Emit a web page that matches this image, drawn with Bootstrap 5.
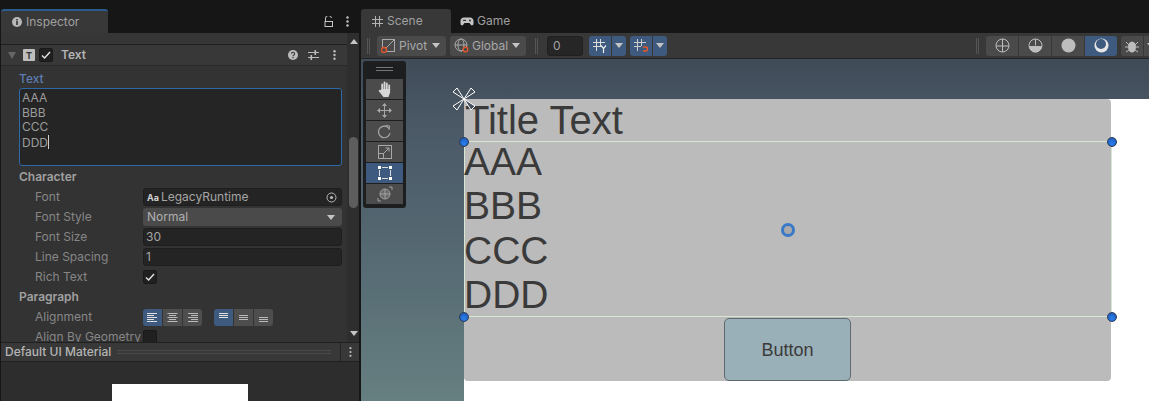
<!DOCTYPE html>
<html lang="en">
<head>
  <meta charset="UTF-8" />
  <meta name="viewport" content="width=device-width, initial-scale=1" />
  <title>Unity Editor</title>
  <link href="https://cdn.jsdelivr.net/npm/bootstrap@5.3.0/dist/css/bootstrap.min.css" rel="stylesheet" />
  <style>
    html, body { height: 401px; overflow: hidden; background: #161616; }
    body { font-family: Inter, "Liberation Sans", sans-serif; font-size: 12px; line-height: 1; color: #a4a4a4; }
    svg { display: block; flex-shrink: 0; }
    .editor { width: 1149px; height: 401px; }
    .left-side { width: 358px; margin-left: 1px; margin-right: 2px; }
    .right-side { width: 788px; }
    .tab-strip { height: 33px; padding-top: 9px; }
    .left-tab { width: 107px; height: 24px; background: #383838; border-top: 2px solid #2b5a8c; border-radius: 3px 3px 0 0; padding-left: 11px; gap: 4px; color: #a0a0a0; }
    .scene-tab { width: 90px; height: 24px; background: #383838; border-radius: 3px 3px 0 0; padding-left: 11px; gap: 4px; color: #a0a0a0; }
    .game-tab { padding-left: 9px; gap: 3px; color: #a0a0a0; }
    .tab-tools { gap: 12px; padding-right: 10px; padding-top: 1px; }
    .insp-body { background: #333; height: 309px; }
    .insp-scroll { height: 309px; min-width: 0; }
    .insp-top { height: 12px; border-bottom: 1px solid #1f1f1f; background: #363636; }
    .comp-head { height: 21px; background: #383838; border-bottom: 1px solid #2a2a2a; padding-left: 7px; padding-right: 11px; font-weight: 600; color: #b4b4b4; }
    .head-tools { gap: 10px; }
    .tri-down { width: 0; height: 0; border-left: 4.5px solid transparent; border-right: 4.5px solid transparent; border-top: 7px solid #666; }
    .t-icon { width: 12px; height: 12px; background: #bdbdbd; color: #333; font-size: 9px; font-weight: 700; border-radius: 1px; margin-left: 7px; }
    .check-box { width: 14px; height: 14px; background: #202020; border: 1px solid #191919; border-radius: 2px; }
    .comp-body { padding-left: 18px; padding-right: 3px; height: 276px; overflow: hidden; }
    .field-name { color: #5d7cb0; font-weight: 500; height: 12px; padding-top: 7px; box-sizing: content-box; padding-bottom: 3px; }
    .text-box { width: 323px; height: 78px; margin-bottom: 1px; background: #252525; border: 1px solid #2f6aa8; border-radius: 3px; padding: 2px; color: #9c9c9c; line-height: 14.6px; }
    .caret-bar { display: inline-block; width: 1px; height: 14px; background: #cfcfcf; vertical-align: -2px; }
    .group-name { height: 20px; font-weight: 600; color: #a0a0a0; }
    .prop-row { height: 20px; padding-left: 16px; color: #868686; }
    .prop-name { width: 108px; white-space: nowrap; }
    .inp-dark { width: 199px; height: 18px; background: #242424; border: 1px solid #1e1e1e; border-radius: 3px; padding-left: 2px; color: #a4a4a4; }
    .aa-glyph { font-size: 9px; font-weight: 700; color: #d0d0d0; margin-left: 1px; margin-right: 2px; }
    .inp-drop { width: 199px; height: 18px; background: #4a4a4a; border-radius: 3px; padding: 0 7px 0 4px; color: #b0b0b0; }
    .tri-small { width: 0; height: 0; border-left: 4px solid transparent; border-right: 4px solid transparent; border-top: 5px solid #c4c4c4; flex-shrink: 0; }
    .seg-group { height: 17px; gap: 1px; }
    .seg-gap { margin-left: 12px; }
    .seg-btn { width: 19px; height: 17px; background: #4e4e4e; }
    .seg-btn:first-child { border-radius: 3px 0 0 3px; }
    .seg-btn:last-child { border-radius: 0 3px 3px 0; }
    .seg-on { background: #3e5a7e; }
    .scroll-col { width: 12px; background: #2e2e2e; flex-shrink: 0; }
    .scroll-thumb { width: 9px; height: 71px; background: #5d5d5d; border-radius: 5px; margin-left: 2px; margin-top: 93px; }
    .tri-up { width: 0; height: 0; border-left: 4px solid transparent; border-right: 4px solid transparent; border-bottom: 5px solid #c4c4c4; margin: 6px 0 0 3px; }
    .tri-end { margin: auto 0 6px 3px; }
    .mat-bar { height: 20px; background: #383838; border-top: 1px solid #202020; border-bottom: 1px solid #202020; padding-left: 4px; font-weight: 500; color: #b4b4b4; gap: 6px; white-space: nowrap; }
    .mat-lines { width: 214px; height: 4px; flex-shrink: 0; border-top: 1px solid #4a4a4a; border-bottom: 1px solid #4a4a4a; }
    .mat-more { width: 19px; height: 100%; border-left: 1px solid #222; margin-left: 3px; }
    .mat-preview { height: 39px; background: #2d2d2d; padding-top: 22px; padding-left: 111px; }
    .white-swatch { width: 136px; height: 17px; background: #fff; }
    .tool-strip { height: 26px; background: #383838; padding-left: 6px; border-bottom: 1px solid #242424; overflow: hidden; }
    .grip { width: 3px; height: 16px; border-left: 1px solid #555; border-right: 1px solid #555; flex-shrink: 0; }
    .tb-btn { height: 20px; background: #4a4a4a; border-radius: 3px; color: #a8a8a8; gap: 3px; padding: 0 6px 0 4px; flex-shrink: 0; }
    .btn-pivot { width: 69px; margin-left: 7px; }
    .btn-global { width: 76px; margin-left: 4px; }
    .grip-mid { margin-left: 9px; }
    .tb-blue { height: 20px; background: #3e5a7e; flex-shrink: 0; }
    .snap-l { width: 22px; border-radius: 3px 0 0 3px; }
    .snap-r { width: 14px; margin-left: 1px; border-radius: 0 3px 3px 0; }
    .snap-first { margin-left: 6px; }
    .snap-next { margin-left: 4px; }
    .snap-inp { width: 36px; height: 20px; margin-left: 9px; background: #262626; border: 1px solid #202020; border-radius: 3px; padding-left: 5px; color: #a4a4a4; }
    .view-tools { margin-right: -9px; }
    .view-grip { margin-right: 7px; }
    .view-set { column-gap: 1px; }
    .view-btn { width: 32px; height: 20px; background: #4a4a4a; }
    .view-btn:first-child { border-radius: 3px 0 0 3px; }
    .view-btn:last-child { border-radius: 0 3px 3px 0; background: #3e5a7e; }
    .bug-btn { width: 22px; margin-left: 4px; padding: 0; border-radius: 3px 0 0 3px; }
    .bug-drop { width: 14px; margin-left: 1px; padding: 0; border-radius: 0 3px 3px 0; }
    .scene-canvas { position: relative; height: 342px; overflow: hidden; background: linear-gradient(#3f4b57 0%, #4a5865 18%, #566b74 60%, #667f80 100%); }
    .white-plane { position: absolute; left: 103px; top: 40px; width: 685px; height: 302px; background: #fff; }
    .ui-panel { position: absolute; left: 103px; top: 40px; width: 647px; height: 282px; background: #bbb; border-radius: 4px; color: #3a3a3a; font-family: "Liberation Sans", Arial, sans-serif; }
    .ui-title { position: absolute; left: 1px; top: 0; font-size: 40px; line-height: 42px; white-space: nowrap; }
    .ui-text { position: absolute; left: 0; top: 42px; width: 648px; height: 176px; border: 1px solid #d6e6d2; font-size: 39px; line-height: 44.4px; white-space: nowrap; }
    .ui-text div { margin-left: -1px; position: relative; top: -2px; }
    .ui-button { position: absolute; left: 260px; top: 219px; width: 127px; height: 63px; background: #9ab0b8; border: 1px solid #5f6a6e; border-radius: 5px; font-size: 18px; }
    .rect-dot { position: absolute; width: 10px; height: 10px; border-radius: 50%; background: radial-gradient(circle at 50% 70%, #2b80f0, #1a55b0); border: 1px solid #2a3a55; }
    .pivot-dot { position: absolute; left: 317px; top: 124px; width: 14px; height: 14px; border-radius: 50%; border: 3px solid #3a78c8; background: #a9a9a9; }
    .tool-palette { position: absolute; left: 2px; top: 2px; width: 43px; height: 147px; background: #1c1e20; border-radius: 3px; padding: 18px 3px 0; }
    .pal-btn { width: 37px; height: 20px; background: #4b4b4b; margin-bottom: 1px; }
    .pal-on { background: #3e5a7e; }
    .pal-grip { position: absolute; left: 13px; top: 6px; width: 17px; height: 4px; border-top: 1px solid #777; border-bottom: 1px solid #777; }
    .gizmo-star { position: absolute; left: 91px; top: 28px; }
  </style>
</head>
<body>
<div class="editor d-flex">

  <!-- Inspector -->
  <div class="left-side d-flex flex-column">
    <div class="tab-strip d-flex justify-content-between">
      <div class="left-tab d-flex align-items-center">
        <svg width="10" height="10" viewBox="0 0 10 10"><circle cx="5" cy="5" r="5" fill="#b8b8b8"/><rect x="4.2" y="4" width="1.6" height="4" fill="#333"/><rect x="4.2" y="2" width="1.6" height="1.4" fill="#333"/></svg>
        <span>Inspector</span>
      </div>
      <div class="tab-tools d-flex align-items-center">
        <svg width="10" height="11" viewBox="0 0 10 11"><path d="M1.5 5V3a3 3 0 0 1 6-1" fill="none" stroke="#c4c4c4"/><rect x="1" y="5.5" width="7.5" height="5" fill="none" stroke="#c4c4c4"/></svg>
        <svg width="3" height="11" viewBox="0 0 3 11"><circle cx="1.5" cy="1.5" r="1.2" fill="#c4c4c4"/><circle cx="1.5" cy="5.5" r="1.2" fill="#c4c4c4"/><circle cx="1.5" cy="9.5" r="1.2" fill="#c4c4c4"/></svg>
      </div>
    </div>
    <div class="insp-body d-flex">
      <div class="insp-scroll flex-grow-1">
        <div class="insp-top"></div>
        <div class="comp-head d-flex align-items-center">
          <div class="tri-down"></div>
          <div class="t-icon d-flex align-items-center justify-content-center">T</div>
          <div class="check-box d-flex align-items-center justify-content-center ms-1">
            <svg width="10" height="8" viewBox="0 0 10 8"><path d="M1 4.5L3.6 7L9 1" fill="none" stroke="#e4e4e4" stroke-width="1.4"/></svg>
          </div>
          <span class="ms-2">Text</span>
          <div class="head-tools ms-auto d-flex align-items-center">
            <svg width="10" height="10" viewBox="0 0 10 10"><circle cx="5" cy="5" r="5" fill="#bcbcbc"/><path d="M3.4 3.8a1.6 1.5 0 1 1 2.2 1.4c-.5.3-.6.5-.6 1" fill="none" stroke="#333" stroke-width="1.1"/><rect x="4.4" y="7" width="1.2" height="1.2" fill="#333"/></svg>
            <svg width="11" height="10" viewBox="0 0 11 10"><path d="M0 2.5h11M0 7.5h11" stroke="#bcbcbc"/><rect x="6.5" y="0" width="1.6" height="5" fill="#bcbcbc"/><rect x="2.5" y="5" width="1.6" height="5" fill="#bcbcbc"/></svg>
            <svg class="ms-1" width="3" height="10" viewBox="0 0 3 10"><circle cx="1.5" cy="1.2" r="1.2" fill="#bcbcbc"/><circle cx="1.5" cy="5" r="1.2" fill="#bcbcbc"/><circle cx="1.5" cy="8.8" r="1.2" fill="#bcbcbc"/></svg>
          </div>
        </div>
        <div class="comp-body">
          <div class="field-name">Text</div>
          <div class="text-box">AAA<br>BBB<br>CCC<br>DDD<span class="caret-bar"></span></div>
          <div class="group-name d-flex align-items-center">Character</div>
          <div class="prop-row d-flex align-items-center">
            <div class="prop-name">Font</div>
            <div class="inp-dark d-flex align-items-center">
              <span class="aa-glyph">Aa</span>
              <span>LegacyRuntime</span>
              <svg class="ms-auto me-1" width="11" height="11" viewBox="0 0 11 11"><circle cx="5.5" cy="5.5" r="4.5" fill="none" stroke="#b8b8b8"/><circle cx="5.5" cy="5.5" r="1.6" fill="#b8b8b8"/></svg>
            </div>
          </div>
          <div class="prop-row d-flex align-items-center">
            <div class="prop-name">Font Style</div>
            <div class="inp-drop d-flex align-items-center justify-content-between"><span>Normal</span><span class="tri-small"></span></div>
          </div>
          <div class="prop-row d-flex align-items-center">
            <div class="prop-name">Font Size</div>
            <div class="inp-dark d-flex align-items-center">30</div>
          </div>
          <div class="prop-row d-flex align-items-center">
            <div class="prop-name">Line Spacing</div>
            <div class="inp-dark d-flex align-items-center">1</div>
          </div>
          <div class="prop-row d-flex align-items-center">
            <div class="prop-name">Rich Text</div>
            <div class="check-box d-flex align-items-center justify-content-center">
              <svg width="10" height="8" viewBox="0 0 10 8"><path d="M1 4.5L3.6 7L9 1" fill="none" stroke="#e4e4e4" stroke-width="1.4"/></svg>
            </div>
          </div>
          <div class="group-name d-flex align-items-center">Paragraph</div>
          <div class="prop-row d-flex align-items-center">
            <div class="prop-name">Alignment</div>
            <div class="seg-group d-flex">
              <div class="seg-btn seg-on d-flex align-items-center justify-content-center"><svg width="11" height="9" viewBox="0 0 11 9"><path d="M0 .5h10M0 2.5h7M0 4.5h10M0 6.5h7M0 8.5h10" stroke="#e0e0e0"/></svg></div>
              <div class="seg-btn d-flex align-items-center justify-content-center"><svg width="11" height="9" viewBox="0 0 11 9"><path d="M.5 .5h10M2 2.5h7M.5 4.5h10M2 6.5h7M.5 8.5h10" stroke="#bbb"/></svg></div>
              <div class="seg-btn d-flex align-items-center justify-content-center"><svg width="11" height="9" viewBox="0 0 11 9"><path d="M1 .5h10M4 2.5h7M1 4.5h10M4 6.5h7M1 8.5h10" stroke="#bbb"/></svg></div>
            </div>
            <div class="seg-group seg-gap d-flex">
              <div class="seg-btn seg-on d-flex justify-content-center pt-1"><svg width="11" height="5" viewBox="0 0 11 5"><path d="M1 .5h9M1 2.5h9M1 4.5h9" stroke="#e0e0e0"/></svg></div>
              <div class="seg-btn d-flex align-items-center justify-content-center"><svg width="11" height="5" viewBox="0 0 11 5"><path d="M1 .5h9M1 2.5h9M1 4.5h9" stroke="#bbb"/></svg></div>
              <div class="seg-btn d-flex align-items-end justify-content-center pb-1"><svg width="11" height="5" viewBox="0 0 11 5"><path d="M1 .5h9M1 2.5h9M1 4.5h9" stroke="#bbb"/></svg></div>
            </div>
          </div>
          <div class="prop-row d-flex align-items-center">
            <div class="prop-name">Align By Geometry</div>
            <div class="check-box"></div>
          </div>
        </div>
      </div>
      <div class="scroll-col d-flex flex-column">
        <div class="tri-up"></div>
        <div class="scroll-thumb"></div>
        <div class="tri-small tri-end"></div>
      </div>
    </div>
    <div class="mat-bar d-flex align-items-center">
      <span>Default UI Material</span>
      <div class="mat-lines"></div>
      <div class="mat-more d-flex align-items-center justify-content-center">
        <svg width="3" height="10" viewBox="0 0 3 10"><circle cx="1.5" cy="1.2" r="1.1" fill="#bcbcbc"/><circle cx="1.5" cy="5" r="1.1" fill="#bcbcbc"/><circle cx="1.5" cy="8.8" r="1.1" fill="#bcbcbc"/></svg>
      </div>
    </div>
    <div class="mat-preview"><div class="white-swatch"></div></div>
  </div>

  <!-- Scene -->
  <div class="right-side d-flex flex-column">
    <div class="tab-strip d-flex">
      <div class="scene-tab d-flex align-items-center">
        <svg width="11" height="11" viewBox="0 0 11 11"><path d="M3.5 0v11M7.5 0v11M0 3.5h11M0 7.500h11" stroke="#b4b4b4"/></svg>
        <span>Scene</span>
      </div>
      <div class="game-tab d-flex align-items-center">
        <svg width="14" height="9" viewBox="0 0 14 9"><path d="M4 .5h6a3.500 3.500 0 0 1 3.500 4V7a1.500 1.500 0 0 1-2.700.8L9.500 6h-5L3.200 7.800A1.500 1.500 0 0 1 .5 7V4.500A3.500 3.500 0 0 1 4 .5z" fill="#c4c4c4"/><rect x="3" y="2.800" width="3" height="1.200" fill="#333"/><circle cx="10" cy="3.400" r="1" fill="#333"/></svg>
        <span>Game</span>
      </div>
    </div>
    <div class="tool-strip d-flex align-items-center">
      <div class="grip"></div>
      <div class="tb-btn btn-pivot d-flex align-items-center">
        <svg width="15" height="15" viewBox="0 0 15 15"><rect x="1.500" y="1.500" width="12" height="12" fill="none" stroke="#aaa"/><path d="M3 12L13 2" stroke="#aaa"/><circle cx="3" cy="12" r="2.500" fill="#4a4a4a" stroke="#e8562a" stroke-width="1.300"/></svg>
        <span>Pivot</span><span class="tri-small ms-auto"></span>
      </div>
      <div class="tb-btn btn-global d-flex align-items-center">
        <svg width="15" height="15" viewBox="0 0 15 15"><circle cx="7" cy="7" r="6" fill="none" stroke="#aaa"/><ellipse cx="7" cy="7" rx="3" ry="6" fill="none" stroke="#aaa"/><path d="M1 7h12" stroke="#aaa"/><circle cx="11.500" cy="11.500" r="2.300" fill="#4a4a4a" stroke="#e8562a" stroke-width="1.300"/></svg>
        <span>Global</span><span class="tri-small ms-auto"></span>
      </div>
      <div class="grip grip-mid"></div>
      <div class="snap-inp d-flex align-items-center">0</div>
      <div class="tb-blue snap-l snap-first d-flex align-items-center justify-content-center">
        <svg width="14" height="14" viewBox="0 0 14 14"><path d="M3.500 0v12M7.500 0v8M0 3.500h12M0 7.500h7" stroke="#ddd"/><path d="M8 6.500l2.500 3 2.500-3M10.500 9.500V14" fill="none" stroke="#eee" stroke-width="1.200"/></svg>
      </div>
      <div class="tb-blue snap-r d-flex align-items-center justify-content-center"><span class="tri-small"></span></div>
      <div class="tb-blue snap-l snap-next d-flex align-items-center justify-content-center">
        <svg width="14" height="14" viewBox="0 0 14 14"><path d="M3.500 0v12M7.500 0v7M0 3.500h12M0 7.500h7" stroke="#ccc"/><path d="M9 8h2.500a2 2 0 0 1 0 4H9" fill="none" stroke="#e8562a" stroke-width="1.600"/></svg>
      </div>
      <div class="tb-blue snap-r d-flex align-items-center justify-content-center"><span class="tri-small"></span></div>
      <div class="view-tools d-flex align-items-center ms-auto">
        <div class="grip view-grip"></div>
        <div class="view-set d-flex">
          <div class="view-btn d-flex align-items-center justify-content-center">
            <svg width="15" height="15" viewBox="0 0 15 15"><circle cx="7.500" cy="7.500" r="6.500" fill="none" stroke="#bdbdbd"/><path d="M1 8h13M7.500 1v13" stroke="#bdbdbd"/></svg>
          </div>
          <div class="view-btn d-flex align-items-center justify-content-center">
            <svg width="15" height="15" viewBox="0 0 15 15"><circle cx="7.500" cy="7.500" r="6.500" fill="none" stroke="#bdbdbd"/><path d="M1 8h13a6.500 6.500 0 0 1-13 0z" fill="#bdbdbd"/><path d="M7.500 1v6.500" stroke="#bdbdbd"/></svg>
          </div>
          <div class="view-btn d-flex align-items-center justify-content-center">
            <svg width="15" height="15" viewBox="0 0 15 15"><circle cx="7.500" cy="7.500" r="7" fill="#bdbdbd"/></svg>
          </div>
          <div class="view-btn d-flex align-items-center justify-content-center">
            <svg width="15" height="15" viewBox="0 0 15 15"><circle cx="7.500" cy="7.500" r="7" fill="#e6e6e6"/><circle cx="7" cy="6" r="5" fill="#3e5a7e"/></svg>
          </div>
        </div>
        <div class="tb-btn bug-btn d-flex align-items-center justify-content-center">
          <svg width="14" height="14" viewBox="0 0 14 14"><ellipse cx="7" cy="8" rx="4" ry="5.500" fill="#bdbdbd"/><path d="M1 3l3 3M13 3l-3 3M0 8h3M14 8h-3M1 13l3-2M13 13l-3-2" stroke="#bdbdbd"/></svg>
        </div>
        <div class="tb-btn bug-drop d-flex align-items-center justify-content-center"><span class="tri-small"></span></div>
      </div>
    </div>
    <div class="scene-canvas">
      <div class="white-plane"></div>
      <div class="ui-panel">
        <div class="ui-title">Title Text</div>
        <div class="ui-text"><div>AAA</div><div>BBB</div><div>CCC</div><div>DDD</div></div>
        <div class="ui-button d-flex align-items-center justify-content-center">Button</div>
        <div class="rect-dot" style="left:-5px;top:38px"></div>
        <div class="rect-dot" style="left:643px;top:38px"></div>
        <div class="rect-dot" style="left:-5px;top:213px"></div>
        <div class="rect-dot" style="left:643px;top:213px"></div>
        <div class="pivot-dot"></div>
      </div>
      <svg class="gizmo-star" width="24" height="24" viewBox="0 0 24 24"><path d="M12 12L5 1 1 5zM12 12L19 1 23 5zM12 12L5 23 1 19zM12 12L19 23 23 19z" fill="#46525f" stroke="#fff"/></svg>
      <div class="tool-palette">
        <div class="pal-grip"></div>
        <div class="pal-btn d-flex align-items-center justify-content-center">
          <svg width="14" height="16" viewBox="0 0 14 16"><path d="M4.200 9V3.500M6.500 8V1.500M8.800 8V2.500M11.200 9V4.500" stroke="#d8d8d8" stroke-width="1.800" stroke-linecap="round"/><path d="M3.300 8h8.800v3.500L10.500 16H5.500L1 10.500c-.8-1.200.8-2.500 2.300-1.200z" fill="#d8d8d8"/></svg>
        </div>
        <div class="pal-btn d-flex align-items-center justify-content-center">
          <svg width="15" height="15" viewBox="0 0 15 15"><path d="M7.500 1v13M1 7.500h13" stroke="#a8a8a8"/><path d="M7.500 0L5 3h5zM7.500 15L5 12h5zM0 7.500L3 5v5zM15 7.500L12 5v5z" fill="#a8a8a8"/></svg>
        </div>
        <div class="pal-btn d-flex align-items-center justify-content-center">
          <svg width="15" height="15" viewBox="0 0 15 15"><path d="M12 4.500A5.800 5.800 0 1 0 13 9" fill="none" stroke="#a8a8a8" stroke-width="1.200"/><path d="M8.500 1.500l4 .5-.5 4" fill="none" stroke="#a8a8a8"/></svg>
        </div>
        <div class="pal-btn d-flex align-items-center justify-content-center">
          <svg width="14" height="14" viewBox="0 0 14 14"><rect x=".5" y=".5" width="13" height="13" fill="none" stroke="#a8a8a8"/><rect x=".5" y="8.500" width="5" height="5" fill="none" stroke="#a8a8a8"/><path d="M6 8l5-5M7.500 3H11v3.500" fill="none" stroke="#a8a8a8"/></svg>
        </div>
        <div class="pal-btn pal-on d-flex align-items-center justify-content-center">
          <svg width="14" height="14" viewBox="0 0 14 14"><path d="M4 1.500h6M4 12.500h6M1.500 4v6M12.500 4v6" stroke="#ddd"/><rect x="0" y="0" width="3" height="3" fill="#fff"/><rect x="11" y="0" width="3" height="3" fill="#fff"/><rect x="0" y="11" width="3" height="3" fill="#fff"/><rect x="11" y="11" width="3" height="3" fill="#fff"/></svg>
        </div>
        <div class="pal-btn d-flex align-items-center justify-content-center">
          <svg width="16" height="16" viewBox="0 0 16 16"><circle cx="8" cy="8" r="5" fill="#6a6a6a" stroke="#a0a0a0"/><path d="M8 3v10M3 8h10" stroke="#a0a0a0"/><path d="M1 12v3h3M15 4V1h-3" fill="none" stroke="#a0a0a0"/></svg>
        </div>
      </div>
    </div>
  </div>
</div>
<script src="https://cdn.jsdelivr.net/npm/bootstrap@5.3.0/dist/js/bootstrap.bundle.min.js"></script>
</body>
</html>
